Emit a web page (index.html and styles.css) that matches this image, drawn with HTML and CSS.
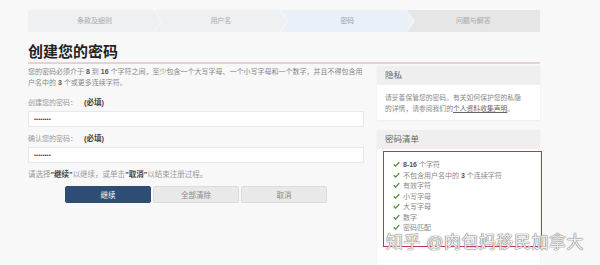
FILE: index.html
```html
<!DOCTYPE html>
<html>
<head>
    <title>创建您的密码</title>
    <link rel="stylesheet" href="styles.css">
</head>
<body>
    <div class="page">
        <div class="steps">
            <div class="step step-done first">条款及细则</div>
            <div class="step step-done">用户名</div>
            <div class="step step-active">密码</div>
            <div class="step step-todo">问题与解答</div>
        </div>

        <h1 class="title">创建您的密码</h1>

        <div class="columns">
            <div class="main">
                <p class="intro">您的密码必须介于 <b>8</b> 到 <b>16</b> 个字符之间，至少包含一个大写字母、一个小写字母和一个数字，并且不得包含用户名中的 <b>3</b> 个或更多连续字符。</p>

                <div class="form-group">
                    <label for="pw1">创建您的密码： <b>(必填)</b></label>
                    <input type="password" id="pw1" value="abcdefgh">
                </div>

                <div class="form-group">
                    <label for="pw2">确认您的密码： <b>(必填)</b></label>
                    <input type="password" id="pw2" value="abcdefgh">
                </div>

                <p class="hint">请选择<b>"继续"</b>以继续，或单击<b>"取消"</b>以结束注册过程。</p>

                <div class="buttons">
                    <button class="btn btn-primary">继续</button>
                    <button class="btn">全部清除</button>
                    <button class="btn">取消</button>
                </div>
            </div>

            <div class="side">
                <div class="panel">
                    <div class="panel-head">隐私</div>
                    <div class="panel-body">请妥善保管您的密码。有关如何保护您的私隐的详情，请参阅我们的<a href="#">个人资料收集声明</a>。</div>
                </div>

                <div class="panel">
                    <div class="panel-head">密码清单</div>
                    <div class="panel-body checklist-wrap">
                        <ul class="checklist">
                            <li><svg viewBox="0 0 10 8"><path d="M1 4.2 L3.8 7 L9 1.2" /></svg><b>8-16</b> 个字符</li>
                            <li><svg viewBox="0 0 10 8"><path d="M1 4.2 L3.8 7 L9 1.2" /></svg>不包含用户名中的 <b>3</b> 个连续字符</li>
                            <li><svg viewBox="0 0 10 8"><path d="M1 4.2 L3.8 7 L9 1.2" /></svg>有效字符</li>
                            <li><svg viewBox="0 0 10 8"><path d="M1 4.2 L3.8 7 L9 1.2" /></svg>小写字母</li>
                            <li><svg viewBox="0 0 10 8"><path d="M1 4.2 L3.8 7 L9 1.2" /></svg>大写字母</li>
                            <li><svg viewBox="0 0 10 8"><path d="M1 4.2 L3.8 7 L9 1.2" /></svg>数字</li>
                            <li><svg viewBox="0 0 10 8"><path d="M1 4.2 L3.8 7 L9 1.2" /></svg>密码匹配</li>
                        </ul>
                    </div>
                </div>
            </div>
        </div>
    </div>

    <div class="watermark">知乎 @肉包妈移民加拿大</div>
</body>
</html>
```

FILE: styles.css
```css
body {
    font-family: "Liberation Sans", "Noto Sans CJK SC", sans-serif;
    background-color: #f8f8f8;
    margin: 0;
    color: #777;
}
.page {
    width: 512px;
    margin-left: 28px;
    padding-top: 10px;
}
.steps {
    display: flex;
    height: 22px;
}
.step {
    flex: 1;
    margin-left: -7px;
    font-size: 7px;
    line-height: 22px;
    text-align: center;
    color: #aaa;
    clip-path: polygon(0 0, calc(100% - 8px) 0, 100% 50%, calc(100% - 8px) 100%, 0 100%, 8px 50%);
}
.step.first {
    margin-left: 0;
    border-radius: 3px 0 0 3px;
    clip-path: polygon(0 0, calc(100% - 8px) 0, 100% 50%, calc(100% - 8px) 100%, 0 100%);
}
.step-done {
    background: #eef0f1;
}
.step-active {
    background: #e9f0f8;
    color: #8fa0b4;
}
.step-todo {
    background: #e6e6e6;
    clip-path: polygon(0 0, 100% 0, 100% 100%, 0 100%, 8px 50%);
}
.title {
    margin: 10px 0 0;
    font-size: 15px;
    line-height: 19px;
    color: #222;
    padding-bottom: 1px;
    border-bottom: 2px solid #e2d2d5;
}
.columns {
    display: flex;
    gap: 13px;
    margin-top: 2px;
}
.main {
    width: 336px;
}
.side {
    flex: 1;
}
.intro {
    margin: 0;
    font-size: 7px;
    line-height: 11px;
    color: #888;
}
.intro b {
    color: #555;
}
.form-group {
    margin-top: 9px;
}
.form-group + .form-group {
    margin-top: 6px;
}
label {
    display: block;
    font-size: 7px;
    line-height: 11px;
    color: #999;
    margin-bottom: 3px;
}
label b {
    color: #444;
    margin-left: 5px;
    font-size: 7.5px;
}
input {
    display: block;
    width: 100%;
    height: 16px;
    box-sizing: border-box;
    border: 1px solid #e8e8e8;
    background: white;
    padding: 0 5px;
    font-size: 6px;
    color: #444;
    outline: none;
}
.hint {
    margin: 6px 0 0;
    font-size: 7.5px;
    line-height: 11px;
    color: #999;
}
.hint b {
    color: #444;
}
.buttons {
    display: flex;
    justify-content: center;
    gap: 2px;
    margin-top: 6px;
}
.btn {
    width: 86px;
    height: 17px;
    border: 1px solid #dcdcdc;
    border-radius: 2px;
    background: #e9e9e9;
    color: #888;
    font-family: inherit;
    font-size: 7.5px;
    padding: 0;
}
.btn-primary {
    background: #2e4d75;
    border-color: #2e4d75;
    color: white;
}
.panel {
    margin-bottom: 10px;
    box-shadow: 0 1px 2px rgba(0,0,0,0.05);
}
.panel-head {
    background: #efefef;
    height: 19px;
    line-height: 19px;
    padding-left: 8px;
    font-size: 8.5px;
    color: #666;
}
.panel-body {
    background: white;
    padding: 7px 14px 6px 8px;
    font-size: 6.8px;
    line-height: 11px;
    color: #888;
}
.panel-body a {
    color: #666;
}
.checklist-wrap {
    padding: 2px 0 20px 6px;
}
.checklist {
    list-style: none;
    margin: 0 -2px 0 0;
    padding: 8px 0 12px 9px;
    border: 1px solid #c2364c;
    font-size: 7px;
    line-height: 10.5px;
    color: #888;
}
.checklist b {
    color: #555;
}
.checklist svg {
    width: 7px;
    height: 6px;
    margin-right: 3px;
    fill: none;
    stroke: #5a9a4c;
    stroke-width: 2;
}
.watermark {
    position: absolute;
    left: 386px;
    top: 232px;
    font-size: 17px;
    line-height: 22px;
    color: rgba(255,255,255,0.9);
    text-shadow: 0 0 1px #777, 0 0 1px #777, 0 0 1px #999;
    letter-spacing: 0.5px;
}
```
